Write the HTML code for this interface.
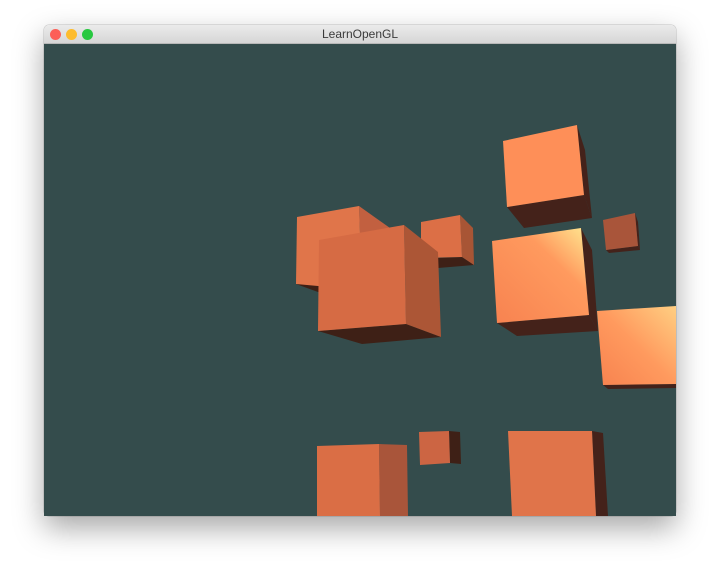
<!DOCTYPE html>
<html><head><style>
html,body{margin:0;padding:0;background:#fff;width:720px;height:579px;overflow:hidden}
.win{position:absolute;left:44px;top:25px;width:632px;height:491px;border-radius:5px;overflow:hidden;box-shadow:0 12px 30px rgba(0,0,0,0.35),0 0 0 0.5px rgba(0,0,0,0.2)}
.tb{position:absolute;left:0;top:0;width:632px;height:18px;background:linear-gradient(#ebebeb,#d6d6d6);border-bottom:1px solid #b8b8b8;font:12px "Liberation Sans",sans-serif;color:#3a3a3a;text-align:center;line-height:18px}
.d{position:absolute;top:4px;width:11px;height:11px;border-radius:50%}
svg{position:absolute;left:0;top:0}
</style></head><body>
<div class="win">
<div class="tb">LearnOpenGL
<div class="d" style="left:6px;background:#fc5f57"></div>
<div class="d" style="left:22px;background:#fdbc2e"></div>
<div class="d" style="left:38px;background:#28c840"></div>
</div>
</div>
<svg width="720" height="579">
<defs>
<linearGradient id="gE" x1="1" y1="0" x2="0" y2="1"><stop offset="0" stop-color="#ffe992"/><stop offset="0.35" stop-color="#ff9a5e"/><stop offset="1" stop-color="#f78250"/></linearGradient>
<linearGradient id="gG" x1="1" y1="0" x2="0" y2="1"><stop offset="0" stop-color="#ffcf82"/><stop offset="0.5" stop-color="#ff9a5e"/><stop offset="1" stop-color="#f7824f"/></linearGradient>
<clipPath id="c"><rect x="44" y="44" width="632" height="472"/></clipPath>
</defs>
<rect x="44" y="44" width="632" height="472" fill="#344c4c"/>
<g clip-path="url(#c)">
<!-- A -->
<polygon points="296,284 318,292 362,291 360,284" fill="#3e2016"/>
<polygon points="359,206 390,228 390,292 362,290" fill="#c26040"/>
<polygon points="297,217 359,206 362,290 296,284" fill="#e0754a"/>
<!-- C -->
<polygon points="438,268 474,265 462,257 438,258" fill="#3e2016"/>
<polygon points="460,215 473,228 474,265 462,257" fill="#a85535"/>
<polygon points="421,222 460,215 462,257 421,258" fill="#dc6f46"/>
<!-- B -->
<polygon points="318,331 362,344 441,337 406,324" fill="#3e2016"/>
<polygon points="404,225 438,252 441,337 406,324" fill="#ac5636"/>
<polygon points="319,240 404,225 406,324 318,331" fill="#d66b44"/>
<!-- D -->
<polygon points="507,207 524,228 592,218 584,195" fill="#44221a"/>
<polygon points="577,125 585,150 592,218 584,195" fill="#44221a"/>
<polygon points="503,141 577,125 584,195 507,207" fill="#fe8f58"/>
<!-- E -->
<polygon points="497,323 517,336 598,331 589,315" fill="#44221a"/>
<polygon points="581,228 592,250 598,331 589,315" fill="#44221a"/>
<polygon points="492,241 581,228 589,315 497,323" fill="url(#gE)"/>
<!-- F -->
<polygon points="606,250 609,253 640,250 638,246" fill="#44221a"/>
<polygon points="635,213 638,222 640,250 638,246" fill="#44221a"/>
<polygon points="603,220 635,213 638,246 606,250" fill="#a9553a"/>
<!-- G -->
<polygon points="603,385 608,389 676,388 676,384" fill="#44221a"/>
<polygon points="597,311 676,306 676,384 603,385" fill="url(#gG)"/>
<!-- H -->
<polygon points="379,444 407,445 408,516 380,516" fill="#a9553a"/>
<polygon points="317,446 379,444 380,516 317,516" fill="#da6e45"/>
<!-- I -->
<polygon points="449,431 460,432 461,464 450,463" fill="#3e2016"/>
<polygon points="419,432 449,431 450,463 420,465" fill="#cc6543"/>
<!-- J -->
<polygon points="592,431 603,433 608,516 596,516" fill="#44221a"/>
<polygon points="508,431 592,431 596,516 512,516" fill="#e0744a"/>
</g>
</svg>
</body></html>
